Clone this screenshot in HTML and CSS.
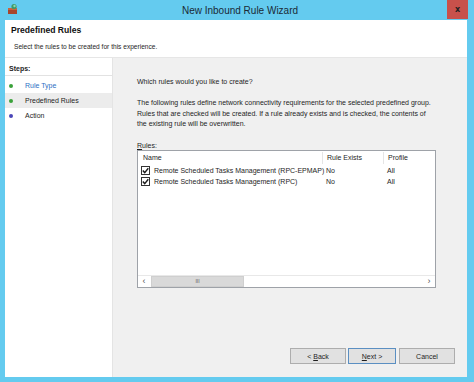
FILE: index.html
```html
<!DOCTYPE html>
<html lang="en">
<head>
  <meta charset="UTF-8" />
  <title>New Inbound Rule Wizard</title>
  <link rel="stylesheet" href="styles.css">
</head>
<body>

  <div class="window">
    <div class="titlebar">
      <svg class="app-icon" width="12" height="12" viewBox="0 0 12 12">
        <rect x="1" y="5" width="9" height="6" fill="#a8452c"/>
        <rect x="1" y="5" width="9" height="2" fill="#c9643e"/>
        <circle cx="7" cy="3.5" r="2.6" fill="#3d9a6a"/>
        <circle cx="7.5" cy="3" r="1.2" fill="#8fd6b0"/>
      </svg>
      <div class="title">New Inbound Rule Wizard</div>
      <button class="close">x</button>
    </div>

    <div class="client">
      <div class="header">
        <h1>Predefined Rules</h1>
        <p>Select the rules to be created for this experience.</p>
      </div>

      <div class="body">
        <div class="sidebar">
          <div class="steps-title">Steps:</div>
          <div class="step done link"><span class="dot green"></span>Rule Type</div>
          <div class="step current"><span class="dot green"></span>Predefined Rules</div>
          <div class="step"><span class="dot blue"></span>Action</div>
        </div>

        <div class="main">
          <div class="content">
            <p class="question">Which rules would you like to create?</p>
            <p class="info">The following rules define network connectivity requirements for the selected predefined group.<br>
              Rules that are checked will be created. If a rule already exists and is checked, the contents of<br>
              the existing rule will be overwritten.</p>

            <div class="rules-label"><u>R</u>ules:</div>
            <div class="listbox">
              <div class="list-head">
                <div class="col name">Name</div>
                <div class="col exists">Rule Exists</div>
                <div class="col profile">Profile</div>
              </div>
              <div class="list-rows">
                <div class="row">
                  <div class="col name"><span class="check"><svg width="7" height="7" viewBox="0 0 7 7"><path d="M0.8 3.6 L2.7 5.6 L6.3 1.2" fill="none" stroke="#1c1c1c" stroke-width="1.4"/></svg></span>Remote Scheduled Tasks Management (RPC-EPMAP)</div>
                  <div class="col exists">No</div>
                  <div class="col profile">All</div>
                </div>
                <div class="row">
                  <div class="col name"><span class="check"><svg width="7" height="7" viewBox="0 0 7 7"><path d="M0.8 3.6 L2.7 5.6 L6.3 1.2" fill="none" stroke="#1c1c1c" stroke-width="1.4"/></svg></span>Remote Scheduled Tasks Management (RPC)</div>
                  <div class="col exists">No</div>
                  <div class="col profile">All</div>
                </div>
              </div>
              <div class="hscroll">
                <div class="arrow">&lsaquo;</div>
                <div class="track">
                  <div class="thumb">III</div>
                </div>
                <div class="arrow">&rsaquo;</div>
              </div>
            </div>
          </div>

          <div class="buttons">
            <button class="btn">&lt; <u>B</u>ack</button>
            <button class="btn default"><u>N</u>ext &gt;</button>
            <button class="btn cancel">Cancel</button>
          </div>
        </div>
      </div>
    </div>
  </div>

</body>
</html>
```

FILE: styles.css
```css
body {
  margin: 0;
  padding: 0;
  font-family: "Liberation Sans", Arial, sans-serif;
  font-size: 7px;
  color: #1e1e1e;
}

.window {
  width: 474px;
  height: 382px;
  box-sizing: border-box;
  background-color: #64cbef;
  padding: 0 7px 5px 5px;
  display: flex;
  flex-direction: column;
}

.titlebar {
  height: 20px;
  display: flex;
  align-items: center;
}

.app-icon {
  margin-left: 2px;
  margin-top: -2px;
}

.title {
  flex: 1;
  text-align: center;
  font-size: 10px;
  color: #1a2a36;
  margin-left: 14px;
}

.close {
  width: 21px;
  height: 19px;
  margin-top: -1px;
  margin-right: -1px;
  background-color: #c8514b;
  border: none;
  color: #222;
  font-family: "DejaVu Sans", sans-serif;
  font-weight: bold;
  font-size: 8px;
  padding: 0;
}

.client {
  flex: 1;
  display: flex;
  flex-direction: column;
  background-color: #ffffff;
}

.header {
  height: 38px;
  box-sizing: border-box;
  padding: 5px 0 0 6px;
  border-bottom: 1px solid #e6e6e6;
}

.header h1 {
  margin: 0;
  font-size: 8.6px;
  font-weight: bold;
  color: #111;
}

.header p {
  margin: 8px 0 0 3px;
  font-size: 6.6px;
}

.body {
  flex: 1;
  display: flex;
}

.sidebar {
  width: 107px;
  border-right: 1px solid #e4e4e4;
  padding-top: 3px;
}

.steps-title {
  font-weight: bold;
  font-size: 7px;
  padding: 4px 4px 3px 4px;
  border-bottom: 1px solid #e2e2e2;
  margin-bottom: 2px;
}

.step {
  display: flex;
  align-items: center;
  height: 15px;
  padding-left: 4px;
  font-size: 7px;
}

.step.link {
  color: #2e6fc4;
}

.step.current {
  background-color: #ececec;
}

.dot {
  width: 4px;
  height: 4px;
  border-radius: 50%;
  margin-right: 12px;
}

.dot.green {
  background-color: #3aa13a;
}

.dot.blue {
  background-color: #4a46b8;
}

.main {
  flex: 1;
  background-color: #f0f0f0;
  display: flex;
  flex-direction: column;
}

.content {
  flex: 1;
  padding: 20px 0 0 24px;
}

.content p {
  margin: 0;
}

.question {
  font-size: 7px;
}

.info {
  margin-top: 13px !important;
  font-size: 7px;
  line-height: 10.5px;
}

.rules-label {
  margin-top: 12px;
  font-size: 7px;
}

.listbox {
  width: 297px;
  height: 136px;
  margin-top: 1px;
  background-color: #ffffff;
  border: 1px solid #9ea2a8;
  display: flex;
  flex-direction: column;
  white-space: nowrap;
}

.list-head {
  display: flex;
  height: 13px;
  align-items: center;
  padding-top: 1px;
}

.list-head .col {
  height: 12px;
  line-height: 12px;
  border-right: 1px solid #e5e5e5;
}

.col.name {
  width: 179px;
  padding-left: 5px;
  display: flex;
  align-items: center;
}

.col.exists {
  width: 56px;
  padding-left: 4px;
}

.col.profile {
  flex: 1;
  padding-left: 4px;
}

.list-head .col.profile {
  border-right: none;
}

.list-rows {
  flex: 1;
}

.row {
  display: flex;
  height: 11px;
  align-items: center;
}

.row .col.name {
  padding-left: 3px;
  width: 181px;
}

.row .col.exists {
  width: 57px;
}

.check {
  width: 7px;
  height: 7px;
  border: 1px solid #333;
  background-color: #fff;
  margin-right: 4px;
  display: flex;
  align-items: center;
  justify-content: center;
}

.hscroll {
  height: 11px;
  display: flex;
  border-top: 1px solid #e8e8e8;
}

.arrow {
  width: 12px;
  text-align: center;
  font-size: 9px;
  line-height: 10px;
  color: #555;
}

.track {
  flex: 1;
  padding: 0 1px;
}

.thumb {
  width: 93px;
  height: 11px;
  background-color: #d9d9d9;
  border: 1px solid #cfcfcf;
  box-sizing: border-box;
  text-align: center;
  font-size: 5px;
  line-height: 9px;
  color: #555;
}

.buttons {
  display: flex;
  justify-content: flex-end;
  gap: 2px;
  padding: 0 12px 13px 0;
}

.btn {
  width: 56px;
  height: 16px;
  background-color: #e1e1e1;
  border: 1px solid #adadad;
  font-family: "Liberation Sans", Arial, sans-serif;
  font-size: 7px;
  color: #1e1e1e;
  padding: 0;
}

.btn.default {
  width: 48px;
  border-color: #5b8fc2;
}

.btn.cancel {
  margin-left: 1px;
}
```
